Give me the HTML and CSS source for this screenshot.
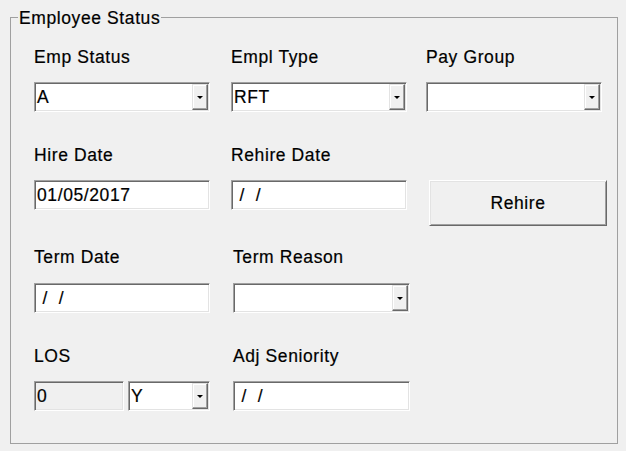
FILE: index.html
```html
<!DOCTYPE html>
<html>
<head>
<meta charset="utf-8">
<link rel="stylesheet" href="styles.css">
</head>
<body>
<div class="page">
  <fieldset class="group">
    <legend class="group-title">Employee Status</legend>

    <div class="row r1">
      <div class="cell">
        <div class="lbl">Emp Status</div>
        <div class="combo"><span class="val">A</span><span class="drop"><i class="arrow"></i></span></div>
      </div>
      <div class="cell">
        <div class="lbl">Empl Type</div>
        <div class="combo"><span class="val">RFT</span><span class="drop"><i class="arrow"></i></span></div>
      </div>
      <div class="cell">
        <div class="lbl">Pay Group</div>
        <div class="combo"><span class="val"></span><span class="drop"><i class="arrow"></i></span></div>
      </div>
    </div>

    <div class="row r2">
      <div class="cell">
        <div class="lbl">Hire Date</div>
        <div class="text"><span class="val">01/05/2017</span></div>
      </div>
      <div class="cell">
        <div class="lbl">Rehire Date</div>
        <div class="text"><span class="val mask"> /  /</span></div>
      </div>
      <div class="cell">
        <div class="lbl"></div>
        <button class="btn">Rehire</button>
      </div>
    </div>

    <div class="row r3">
      <div class="cell">
        <div class="lbl">Term Date</div>
        <div class="text"><span class="val mask"> /  /</span></div>
      </div>
      <div class="cell shift">
        <div class="lbl">Term Reason</div>
        <div class="combo wide"><span class="val"></span><span class="drop"><i class="arrow"></i></span></div>
      </div>
      <div class="cell"></div>
    </div>

    <div class="row r4">
      <div class="cell">
        <div class="lbl">LOS</div>
        <div class="pair">
          <div class="text los"><span class="val">0</span></div>
          <div class="combo unit"><span class="val">Y</span><span class="drop"><i class="arrow"></i></span></div>
        </div>
      </div>
      <div class="cell shift">
        <div class="lbl">Adj Seniority</div>
        <div class="text wide"><span class="val mask"> /  /</span></div>
      </div>
      <div class="cell"></div>
    </div>
  </fieldset>
</div>
</body>
</html>
```

FILE: styles.css
```css
html, body {
  margin: 0;
  padding: 0;
  background: #f0f0f0;
}

body {
  width: 626px;
  height: 451px;
  overflow: hidden;
  font-family: "Liberation Sans", Arial, sans-serif;
  font-size: 17.5px;
  letter-spacing: 0.6px;
  color: #000;
  -webkit-text-stroke: 0.2px #000;
}

.page {
  padding: 7px 0 0 10px;
}

.group {
  margin: 0;
  width: 608px;
  height: 437px;
  box-sizing: border-box;
  border: 1px solid #a0a0a0;
  padding: 18px 0 0 23px;
  min-width: 0;
}

.group-title {
  padding: 1px 1px 0;
  margin-left: -16px;
  line-height: 20px;
  height: 20px;
  box-sizing: content-box;
}

.row {
  display: grid;
  grid-template-columns: 197px 195px 180px;
}

.r2 { margin-top: 32px; }
.r3 { margin-top: 36px; }
.r4 { margin-top: 32px; }

.shift { padding-left: 2px; }

.lbl {
  height: 20px;
  line-height: 20px;
  padding-top: 1px;
  margin-bottom: 15px;
  white-space: nowrap;
}

.r3 .lbl { margin-bottom: 16px; }

.combo,
.text {
  display: flex;
  width: 176px;
  height: 30px;
  box-sizing: border-box;
  background: #fff;
  border-top: 1px solid #a0a0a0;
  border-left: 1px solid #a0a0a0;
  border-right: 1px solid #ffffff;
  border-bottom: 1px solid #ffffff;
  box-shadow: inset 1px 1px 0 #696969, inset -1px -1px 0 #e3e3e3;
  padding: 1px;
}

.wide { width: 177px; }

.val {
  flex: 1;
  padding-left: 1px;
  line-height: 26px;
  white-space: pre;
  overflow: hidden;
}

.drop {
  width: 16px;
  flex: none;
  box-sizing: border-box;
  background: #f0f0f0;
  border-left: 1px solid #e3e3e3;
  border-top: 1px solid #e3e3e3;
  border-right: 1px solid #696969;
  border-bottom: 1px solid #696969;
  box-shadow: inset -1px -1px 0 #a0a0a0, inset 1px 1px 0 #ffffff;
  display: flex;
  align-items: center;
  justify-content: center;
}

.arrow {
  width: 0;
  height: 0;
  border-left: 3px solid transparent;
  border-right: 3px solid transparent;
  border-top: 3px solid #000;
  margin-top: 1px;
}

.pair {
  display: flex;
  gap: 4px;
}

.los {
  width: 90px;
  background: #f0f0f0;
}

.unit {
  width: 82px;
}

.btn {
  display: block;
  margin: 0 0 -16px 3px;
  width: 178px;
  height: 46px;
  box-sizing: border-box;
  padding: 0;
  font: inherit;
  letter-spacing: inherit;
  color: #000;
  background: #f0f0f0;
  border-top: 1px solid #ffffff;
  border-left: 1px solid #ffffff;
  border-right: 1px solid #696969;
  border-bottom: 1px solid #696969;
  box-shadow: inset 1px 1px 0 #e3e3e3, inset -1px -1px 0 #a0a0a0;
  border-radius: 0;
}
```
